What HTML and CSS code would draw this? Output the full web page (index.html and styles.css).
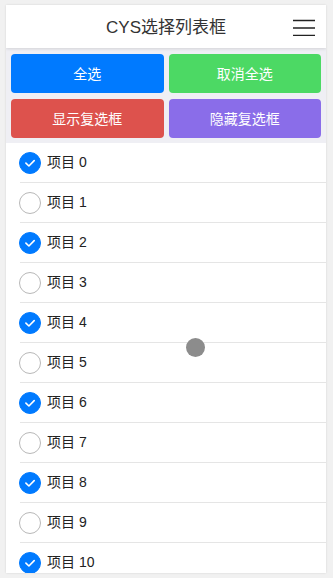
FILE: index.html
```html
<!DOCTYPE html>
<html lang="zh">
<head>
<meta charset="utf-8">
<title>CYS选择列表框</title>
<link rel="stylesheet" href="styles.css">
</head>
<body>
<div class="panel">
  <header class="header">
    <div class="title">CYS选择列表框</div>
    <svg class="menu" width="22" height="18" viewBox="0 0 22 18">
      <path d="M0 2.5H22M0 10H22M0 17.5H22" stroke="#222" stroke-width="1.4" fill="none"/>
    </svg>
  </header>
  <div class="actions">
    <div class="btn blue">全选</div>
    <div class="btn green">取消全选</div>
    <div class="btn red">显示复选框</div>
    <div class="btn purple">隐藏复选框</div>
  </div>
  <ul class="list">
    <li class="item"><span class="box on"><svg viewBox="0 0 22 22"><path d="M6.5 11.2L9.8 14.3L15.6 8.4" stroke="#fff" stroke-width="1.8" fill="none" stroke-linecap="round" stroke-linejoin="round"/></svg></span><span class="label">项目 0</span></li>
    <li class="item"><span class="box"></span><span class="label">项目 1</span></li>
    <li class="item"><span class="box on"><svg viewBox="0 0 22 22"><path d="M6.5 11.2L9.8 14.3L15.6 8.4" stroke="#fff" stroke-width="1.8" fill="none" stroke-linecap="round" stroke-linejoin="round"/></svg></span><span class="label">项目 2</span></li>
    <li class="item"><span class="box"></span><span class="label">项目 3</span></li>
    <li class="item"><span class="box on"><svg viewBox="0 0 22 22"><path d="M6.5 11.2L9.8 14.3L15.6 8.4" stroke="#fff" stroke-width="1.8" fill="none" stroke-linecap="round" stroke-linejoin="round"/></svg></span><span class="label">项目 4</span></li>
    <li class="item"><span class="box"></span><span class="label">项目 5</span></li>
    <li class="item"><span class="box on"><svg viewBox="0 0 22 22"><path d="M6.5 11.2L9.8 14.3L15.6 8.4" stroke="#fff" stroke-width="1.8" fill="none" stroke-linecap="round" stroke-linejoin="round"/></svg></span><span class="label">项目 6</span></li>
    <li class="item"><span class="box"></span><span class="label">项目 7</span></li>
    <li class="item"><span class="box on"><svg viewBox="0 0 22 22"><path d="M6.5 11.2L9.8 14.3L15.6 8.4" stroke="#fff" stroke-width="1.8" fill="none" stroke-linecap="round" stroke-linejoin="round"/></svg></span><span class="label">项目 8</span></li>
    <li class="item"><span class="box"></span><span class="label">项目 9</span></li>
    <li class="item"><span class="box on"><svg viewBox="0 0 22 22"><path d="M6.5 11.2L9.8 14.3L15.6 8.4" stroke="#fff" stroke-width="1.8" fill="none" stroke-linecap="round" stroke-linejoin="round"/></svg></span><span class="label">项目 10</span></li>
  </ul>
  <div class="dot"></div>
</div>
</body>
</html>
```
FILE: styles.css
```css
html, body {
  margin: 0;
  padding: 0;
  background: #f1f1f1;
  font-family: "Liberation Sans", "Noto Sans CJK SC", sans-serif;
}
body {
  padding: 5px 7px 5px 6px;
}
.panel {
  position: relative;
  height: 568px;
  background: #efeff4;
  box-shadow: 0 0 2px rgba(0, 0, 0, 0.12);
  display: flex;
  flex-direction: column;
  overflow: hidden;
}
.header {
  height: 43px;
  flex: none;
  background: #fff;
  box-shadow: 0 1px 3px rgba(0, 0, 0, 0.12);
  display: flex;
  align-items: center;
  justify-content: center;
  position: relative;
  z-index: 1;
}
.title {
  font-size: 17px;
  color: #333;
  padding-bottom: 2px;
}
.menu {
  position: absolute;
  right: 11px;
  top: 13px;
}
.actions {
  flex: none;
  display: grid;
  grid-template-columns: 1fr 1fr;
  gap: 6px 5px;
  padding: 6px 5px 5px 5px;
}
.btn {
  height: 39px;
  border-radius: 4px;
  color: #fff;
  font-size: 14px;
  line-height: 16px;
  display: flex;
  align-items: center;
  justify-content: center;
}
.blue { background: #007aff; }
.green { background: #4cd964; }
.red { background: #dd524d; }
.purple { background: #8a6de9; }
.list {
  flex: 1;
  margin: 0;
  padding: 0;
  list-style: none;
  background: #fff;
  overflow: hidden;
}
.item {
  height: 39px;
  margin-left: 14px;
  border-bottom: 1px solid #e5e5e5;
  display: flex;
  align-items: center;
}
.box {
  width: 20px;
  height: 20px;
  margin-left: -1px;
  border: 1px solid #b8b8b8;
  border-radius: 50%;
  flex: none;
  display: flex;
}
.box.on {
  background: #007aff;
  border-color: #007aff;
}
.box svg {
  width: 20px;
  height: 20px;
}
.label {
  margin-left: 6px;
  font-size: 14px;
  line-height: 16px;
  padding-bottom: 2px;
  color: #222;
}
.dot {
  position: absolute;
  left: 180px;
  top: 333px;
  width: 19px;
  height: 19px;
  border-radius: 50%;
  background: #8c8c8c;
}
```
